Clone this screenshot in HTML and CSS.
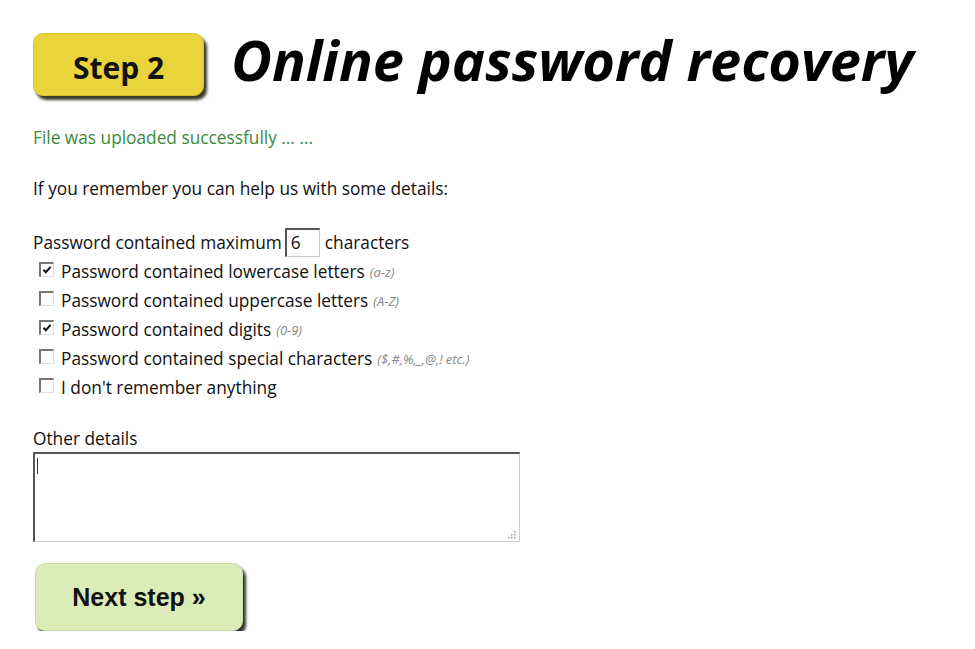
FILE: index.html
```html
<!DOCTYPE html>
<html>
<head>
<meta charset="utf-8">
<link rel="stylesheet" href="styles.css">
</head>
<body>
<div class="page">
  <header class="head">
    <div class="step">Step 2</div>
    <h1 class="title">Online password recovery</h1>
  </header>
  <p class="ok">File was uploaded successfully ... ...</p>
  <p class="intro">If you remember you can help us with some details:</p>
  <div class="maxrow">Password contained maximum <span class="num">6</span> characters</div>
  <ul class="checks">
    <li><span class="cb checked"><svg viewBox="0 0 10 10" width="10" height="10"><path d="M1.5 4.8 L3.8 7.2 L8.6 1.8" fill="none" stroke="#111" stroke-width="2"/></svg></span>Password contained lowercase letters <em>(a-z)</em></li>
    <li><span class="cb"></span>Password contained uppercase letters <em>(A-Z)</em></li>
    <li><span class="cb checked"><svg viewBox="0 0 10 10" width="10" height="10"><path d="M1.5 4.8 L3.8 7.2 L8.6 1.8" fill="none" stroke="#111" stroke-width="2"/></svg></span>Password contained digits <em>(0-9)</em></li>
    <li><span class="cb"></span>Password contained special characters <em>($,#,%,_,@,! etc.)</em></li>
    <li><span class="cb"></span>I don't remember anything</li>
  </ul>
  <div class="other">Other details</div>
  <div class="area"><span class="caret"></span><span class="grip">
    <svg viewBox="0 0 11 11" width="11" height="11"><g fill="#999"><rect x="8" y="2" width="1.5" height="1.5"/><rect x="5" y="5" width="1.5" height="1.5"/><rect x="8" y="5" width="1.5" height="1.5"/><rect x="2" y="8" width="1.5" height="1.5"/><rect x="5" y="8" width="1.5" height="1.5"/><rect x="8" y="8" width="1.5" height="1.5"/></g></svg></span></div>
  <div class="btn">Next step »</div>
</div>
</body>
</html>
```
FILE: styles.css
```css
html, body { margin: 0; padding: 0; background: #fff; }
body { font-family: "Open Sans", "Noto Sans", sans-serif; color: #111; }
.page { padding: 33px 0 0 33px; }
.head { display: flex; align-items: flex-start; gap: 26px; }
.step {
  width: 171px; height: 63px; box-sizing: border-box;
  background: #ead43c; border-radius: 10px;
  border: 1px solid #d8c030;
  box-shadow: 3px 4px 3px #3a3a2a;
  display: flex; align-items: center; justify-content: center;
  font-weight: 700; font-size: 30px; color: #111;
  padding-top: 5px;
}
.title {
  margin: -10px 0 0 1px; font-size: 56px; font-weight: 700; font-style: italic;
  letter-spacing: 0; color: #000; line-height: 1.3;
}
.ok { margin: 31px 0 0 0; color: #3b8a3b; font-size: 17.3px; line-height: 22px; }
.intro { margin: 29px 0 0 0; font-size: 17.3px; line-height: 22px; }
.maxrow { margin-top: 28px; font-size: 17.3px; line-height: 22px; display: flex; align-items: center; }
.num {
  display: inline-block; width: 35px; height: 29px; box-sizing: border-box;
  border-top: 2px solid #555; border-left: 2px solid #555;
  border-right: 1px solid #ccc; border-bottom: 1px solid #ccc;
  margin: 0 5px 0 3px; padding-left: 4px; line-height: 26px;
}
.checks { list-style: none; margin: 0 0 0 0; padding: 0 0 0 6px; }
.checks li { height: 29px; display: flex; align-items: center; font-size: 17.3px; }
.checks em { color: #888; font-size: 13px; margin-left: 5px; }
.cb {
  width: 15px; height: 15px; box-sizing: border-box; margin-right: 7px;
  border-top: 2px solid #777; border-left: 2px solid #777;
  border-right: 1px solid #ddd; border-bottom: 1px solid #ddd;
  display: inline-flex; align-items: center; justify-content: center;
  background: #fff; position: relative; top: -2px;
}
.other { margin-top: 26px; font-size: 17.3px; line-height: 22px; }
.area {
  margin-top: 2px; width: 487px; height: 90px; box-sizing: border-box;
  border-top: 2px solid #555; border-left: 2px solid #555;
  border-right: 1px solid #ccc; border-bottom: 1px solid #ccc;
  position: relative;
}
.caret { position: absolute; left: 2px; top: 4px; width: 1px; height: 16px; background: #333; }
.grip { position: absolute; right: 2px; bottom: 1px; line-height: 0; }
.btn {
  margin-top: 21px; margin-left: 2px; width: 208px; height: 68px; box-sizing: border-box;
  background: #dcecb8; border-radius: 10px; border: 1px solid #c8dca0;
  box-shadow: 3px 4px 3px #333;
  display: flex; align-items: center; justify-content: center;
  font-weight: 700; font-size: 25px; font-family: "Liberation Sans", Arial, sans-serif; color: #111;
}
```
